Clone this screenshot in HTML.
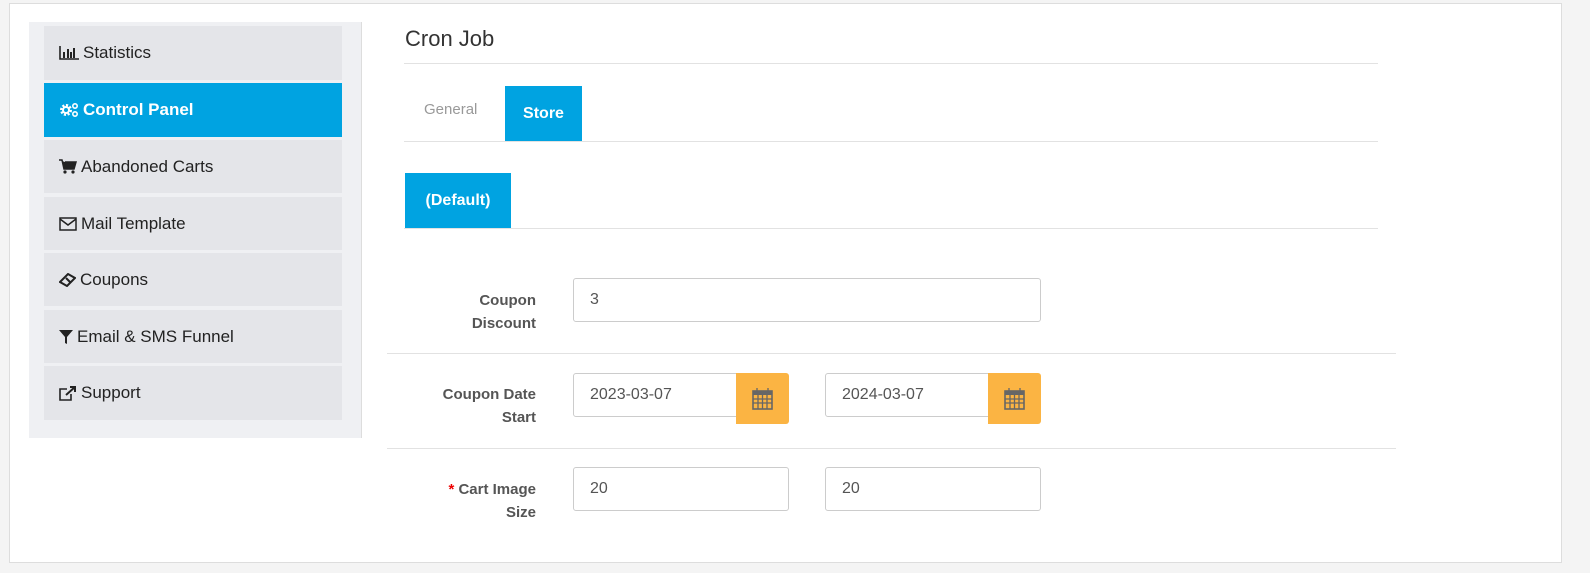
<!DOCTYPE html>
<html><head><meta charset="utf-8"><style>
*{box-sizing:border-box;margin:0;padding:0}
body{width:1590px;height:573px;background:#f4f4f4;font-family:"Liberation Sans",sans-serif;position:relative;overflow:hidden}
.a{position:absolute}
.frame{left:9px;top:3px;width:1553px;height:560px;background:#fff;border:1px solid #ddd}
.side{left:29px;top:22px;width:333px;height:416px;background:#eff0f3;border-right:1px solid #ddd}
.it{left:44px;width:298px;background:#e4e5e9;color:#222;font-size:17px;display:flex;align-items:center;padding-left:15px;gap:4px}
.it.on{background:#00a3e1;color:#fff;font-weight:bold}
.line{height:1px;background:#e2e2e2}
.lbl{width:160px;text-align:right;font-weight:bold;color:#555;font-size:15px;line-height:23px;left:376px}
.in{height:44px;border:1px solid #ccc;border-radius:3px;background:#fff;color:#555;font-size:16px;padding-left:16px;display:flex;align-items:center}
.cal{width:53px;height:51px;background:#fbb443;border-radius:0 3px 3px 0;display:flex;align-items:center;justify-content:center}
</style></head><body>
<div class="a frame"></div>
<div class="a side"></div>
<div class="a it" style="top:26px;height:54px"><svg width="20" height="14" viewBox="0 0 20 14"><path d="M1 0V13H20" stroke="#222" stroke-width="1.6" fill="none"/><rect x="4" y="6" width="2" height="6" fill="#222"/><rect x="8" y="3" width="2" height="9" fill="#222"/><rect x="11" y="6" width="2" height="6" fill="#222"/><rect x="14" y="2" width="2" height="10" fill="#222"/></svg> Statistics</div>
<div class="a it on" style="top:83px;height:54px"><svg width="20" height="16" viewBox="0 0 20 16"><circle cx="7" cy="8" r="4.5" fill="none" stroke="#fff" stroke-width="3" stroke-dasharray="2 1.5"/><circle cx="7" cy="8" r="3" fill="none" stroke="#fff" stroke-width="2"/><circle cx="16" cy="4" r="2.2" fill="none" stroke="#fff" stroke-width="1.6"/><circle cx="16" cy="12" r="2.2" fill="none" stroke="#fff" stroke-width="1.6"/></svg>Control Panel</div>
<div class="a it" style="top:140px;height:53px"><svg width="18" height="15" viewBox="0 0 18 15"><path d="M0 1H3L5 10H15L17 3H6" fill="#222" stroke="#222" stroke-width="1.5"/><circle cx="6" cy="13" r="1.6" fill="#222"/><circle cx="14" cy="13" r="1.6" fill="#222"/></svg>Abandoned Carts</div>
<div class="a it" style="top:197px;height:53px"><svg width="18" height="14" viewBox="0 0 18 14"><rect x="1" y="1" width="16" height="12" stroke="#222" stroke-width="1.5" fill="none"/><path d="M1 2L9 8L17 2" stroke="#222" stroke-width="1.5" fill="none"/></svg>Mail Template</div>
<div class="a it" style="top:253px;height:53px"><svg width="17" height="14" viewBox="0 0 17 14"><path d="M1 9L9 1L16 5L8 13Z" stroke="#222" stroke-width="2" fill="none"/><path d="M7 5L11 9" stroke="#222" stroke-width="2"/></svg>Coupons</div>
<div class="a it" style="top:310px;height:53px"><svg width="14" height="14" viewBox="0 0 14 14"><path d="M0 0H14L8 7V14L6 13V7Z" fill="#222"/></svg>Email &amp; SMS Funnel</div>
<div class="a it" style="top:366px;height:54px"><svg width="18" height="15" viewBox="0 0 18 15"><path d="M8 3H1V14H12V8" stroke="#222" stroke-width="1.6" fill="none"/><path d="M7 9L16 1M11 1H16V6" stroke="#222" stroke-width="2" fill="none"/></svg>Support</div>

<div class="a" style="left:405px;top:26px;font-size:22px;color:#333">Cron Job</div>
<div class="a line" style="left:404px;top:63px;width:974px"></div>
<div class="a" style="left:424px;top:101px;font-size:15px;color:#999">General</div>
<div class="a" style="left:505px;top:86px;width:77px;height:56px;background:#00a3e1;color:#fff;font-weight:bold;font-size:16px;display:flex;align-items:center;justify-content:center">Store</div>
<div class="a line" style="left:404px;top:141px;width:974px"></div>
<div class="a" style="left:405px;top:173px;width:106px;height:56px;background:#00a3e1;color:#fff;font-weight:bold;font-size:16px;display:flex;align-items:center;justify-content:center">(Default)</div>
<div class="a line" style="left:404px;top:228px;width:974px"></div>

<div class="a lbl" style="top:289px">Coupon<br>Discount</div>
<div class="a in" style="left:573px;top:278px;width:468px">3</div>
<div class="a line" style="left:387px;top:353px;width:1009px"></div>
<div class="a lbl" style="top:383px">Coupon Date<br>Start</div>
<div class="a in" style="left:573px;top:373px;width:170px">2023-03-07</div>
<div class="a cal" style="left:736px;top:373px"><svg width="21" height="22" viewBox="0 0 21 22"><rect x="1" y="3" width="19" height="18" fill="none" stroke="#666" stroke-width="1.6"/><rect x="1" y="3" width="19" height="4" fill="#666"/><path d="M5 0V5M16 0V5M1 11H20M1 15H20M6 7V21M10.5 7V21M15 7V21" stroke="#666" stroke-width="1.3"/></svg></div>
<div class="a in" style="left:825px;top:373px;width:170px">2024-03-07</div>
<div class="a cal" style="left:988px;top:373px"><svg width="21" height="22" viewBox="0 0 21 22"><rect x="1" y="3" width="19" height="18" fill="none" stroke="#666" stroke-width="1.6"/><rect x="1" y="3" width="19" height="4" fill="#666"/><path d="M5 0V5M16 0V5M1 11H20M1 15H20M6 7V21M10.5 7V21M15 7V21" stroke="#666" stroke-width="1.3"/></svg></div>
<div class="a line" style="left:387px;top:448px;width:1009px"></div>
<div class="a lbl" style="top:478px"><span style="color:#e00">*</span> Cart Image<br>Size</div>
<div class="a in" style="left:573px;top:467px;width:216px">20</div>
<div class="a in" style="left:825px;top:467px;width:216px">20</div>
</body></html>
